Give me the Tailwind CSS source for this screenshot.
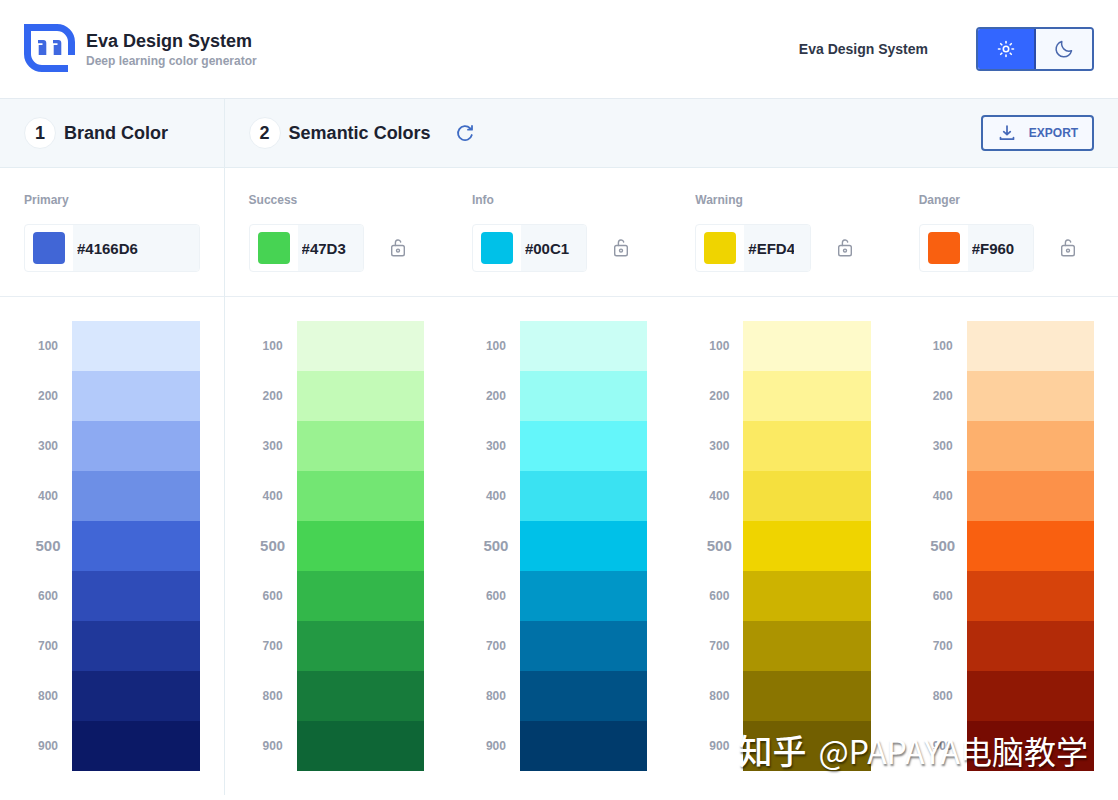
<!DOCTYPE html>
<html lang="en">
<head>
  <meta charset="UTF-8" />
  <meta name="viewport" content="width=device-width, initial-scale=1.0"/>
  <title>Eva Design System</title>
  <script src="https://cdn.jsdelivr.net/npm/@tailwindcss/browser@4"></script>
</head>
<body class="relative bg-white font-['Liberation_Sans',Arial,sans-serif] font-bold text-[#1c2230]">
  <header class="flex h-[99px] items-center justify-between border-b border-[#e4ebf1] px-6 py-6">
    <a href="#" class="flex items-center gap-[11px] self-stretch">
      <svg class="h-12 w-[51px] self-start" viewBox="0 0 51 48" fill="none">
        <path d="M47.5 31V18A14.5 14.5 0 0 0 33 3.5H3.5V30A14.5 14.5 0 0 0 18 44.5H44" stroke="#3366f0" stroke-width="7"/>
        <path d="M14 16H19.300Q22.300 16 22.300 19V31H14.700V21H18.500V19.300H14ZM29 16H34.300Q37.300 16 37.300 19V31H29.700V21H33.500V19.300H29Z" fill="#3f68e0"/>
      </svg>
      <span class="flex flex-col">
        <span class="text-lg leading-6">Eva Design System</span>
        <span class="text-xs leading-4 text-[#979eae]">Deep learning color generator</span>
      </span>
    </a>
    <div class="flex items-center gap-12">
      <a href="#" class="text-sm text-[#2f3749]">Eva Design System</a>
      <div class="flex h-11 w-[118px] overflow-hidden rounded border-2 border-[#3f66b0]">
        <button aria-label="Light theme" class="flex flex-1 items-center justify-center border-r-2 border-[#2a4ba8] bg-[#3366ff] text-white">
          <svg class="size-5" viewBox="0 0 20 20" fill="none" stroke="currentColor" stroke-width="1.600" stroke-linecap="round">
            <circle cx="10" cy="10" r="2.700"/>
            <path d="M10 2.500V4M10 16V17.500M2.500 10H4M16 10H17.500M4.700 4.700L5.800 5.800M14.200 14.200L15.300 15.300M4.700 15.300L5.800 14.200M14.200 5.800L15.300 4.700"/>
          </svg>
        </button>
        <button aria-label="Dark theme" class="flex flex-1 items-center justify-center bg-[#f5f9ff] text-[#4a68ad]">
          <svg class="size-5" viewBox="0 0 20 20" fill="none" stroke="currentColor" stroke-width="1.500" stroke-linejoin="round">
            <path d="M7.800 2.500A7.800 7.800 0 1 0 17.500 11.800C11.500 13.600 6.700 8.600 7.800 2.500Z"/>
          </svg>
        </button>
      </div>
    </div>
  </header>

  <main class="grid grid-cols-5">
    <section>
      <div class="flex h-[69px] items-center gap-2 border-b border-[#e4edf2] bg-[#f4f8fb] px-6">
        <span class="flex size-8 items-center justify-center rounded-full border border-[#e9eff4] bg-white text-lg">1</span>
        <h2 class="text-lg">Brand Color</h2>
      </div>
      <div id="brand"></div>
    </section>

    <section class="col-span-4 border-l border-[#e4edf2]">
      <div class="flex h-[69px] items-center gap-2 border-b border-[#e4edf2] bg-[#f4f8fb] px-6">
        <span class="flex size-8 items-center justify-center rounded-full border border-[#e9eff4] bg-white text-lg">2</span>
        <h2 class="text-lg">Semantic Colors</h2>
        <button aria-label="Refresh colors" class="ml-4 text-[#3f6cc4]">
          <svg class="size-5" viewBox="0 0 20 20" fill="none" stroke="currentColor" stroke-width="1.800" stroke-linecap="round" stroke-linejoin="round">
            <path d="M16.800 12A7 7 0 1 1 15 5.200L16 6.200M17 3V6.700H13"/>
          </svg>
        </button>
        <button class="ml-auto flex h-9 w-[113px] items-center justify-center gap-3 rounded border-2 border-[#4069b0] bg-[#f6f9ff] text-xs text-[#4468b8]">
          <svg class="size-5" viewBox="0 0 20 20" fill="none" stroke="currentColor" stroke-width="1.700" stroke-linecap="round" stroke-linejoin="round">
            <path d="M10 3V11.500M6.700 8.700L10 11.700L13.300 8.700M3.500 14.500V16.200H16.500V14.500"/>
          </svg>
          EXPORT
        </button>
      </div>
      <div id="semantic" class="grid grid-cols-4"></div>
    </section>
  </main>

  <div class="pointer-events-none absolute top-[726px] right-[30px] flex items-center gap-3 font-['Noto_Sans_CJK_SC',sans-serif] text-[32px] leading-12 font-normal whitespace-nowrap text-white [text-shadow:1px_2px_2px_rgb(0_0_0/0.5)]">
    <span class="text-[34px] font-medium">知乎</span>
    <span>@PAPAYA电脑教学</span>
  </div>

  <script>
    const brand = [
      { name: 'Primary', hex: '#4166D6', shades: ['#d8e7fe', '#b3cafa', '#8daaf2', '#6d8fe6', '#4166d6', '#2f4cb8', '#20389a', '#14267c', '#0b1966'] }
    ];
    const semantic = [
      { name: 'Success', hex: '#47D3', shades: ['#e3fcdb', '#c3fab7', '#9af291', '#73e673', '#47d353', '#33b74a', '#239943', '#177b3b', '#0e6636'] },
      { name: 'Info', hex: '#00C1', shades: ['#cafef5', '#97fcf4', '#64f6fa', '#3ae2f2', '#00c1e8', '#0096c7', '#0071a7', '#005286', '#003b6c'] },
      { name: 'Warning', hex: '#EFD400', shades: ['#fefac9', '#fef496', '#fbea63', '#f5e03e', '#efd400', '#cdb300', '#ac9400', '#8a7500', '#725f00'] },
      { name: 'Danger', hex: '#F960', shades: ['#feeacd', '#fed09d', '#fdb06d', '#fc9149', '#f96010', '#d6430b', '#b32b08', '#901804', '#770b02'] }
    ];

    const lock = `
      <button aria-label="Lock color" class="mr-1 ml-3 flex h-11 w-11 shrink-0 items-center justify-center text-[#9298a6]">
        <svg class="size-5" viewBox="0 0 20 20" fill="none" stroke="currentColor" stroke-width="1.400" stroke-linecap="round" stroke-linejoin="round">
          <rect x="3.700" y="7.500" width="12.600" height="10.300" rx="1.800"/>
          <path d="M7.400 7.500V4.700A2.700 2.700 0 0 1 12.700 4"/>
          <circle cx="10" cy="12.600" r="1.500"/>
        </svg>
      </button>`;

    function column(color, lockable) {
      const id = color.name.toLowerCase();
      const rows = color.shades.map((shade, i) => `
        <div class="flex h-[50px] items-center">
          <span class="w-12 shrink-0 text-center text-[#979eae] ${i === 4 ? 'text-[15px]' : 'text-xs'}">${(i + 1) * 100}</span>
          <div class="h-full flex-1" style="background:${shade}"></div>
        </div>`).join('');
      return `
        <div>
          <div class="border-b border-[#e8eef3] px-6 pt-6 pb-6">
            <label for="${id}" class="block text-xs leading-4 text-[#979eae]">${color.name}</label>
            <div class="mt-4 flex items-center">
              <div class="flex h-12 min-w-0 flex-1 items-center overflow-hidden rounded border border-[#edf2f6]">
                <button aria-label="Pick ${id} color" class="mx-2 size-8 shrink-0 rounded" style="background:${color.shades[4]}"></button>
                <div class="h-full min-w-0 flex-1 bg-[#f4f8fb] pr-4 pl-1">
                  <input id="${id}" value="${color.hex}" class="h-full w-full text-[15px] outline-none">
                </div>
              </div>
              ${lockable ? lock : ''}
            </div>
          </div>
          <div class="p-6">${rows}</div>
        </div>`;
    }

    document.getElementById('brand').innerHTML = brand.map(c => column(c, false)).join('');
    document.getElementById('semantic').innerHTML = semantic.map(c => column(c, true)).join('');
  </script>
</body>
</html>
